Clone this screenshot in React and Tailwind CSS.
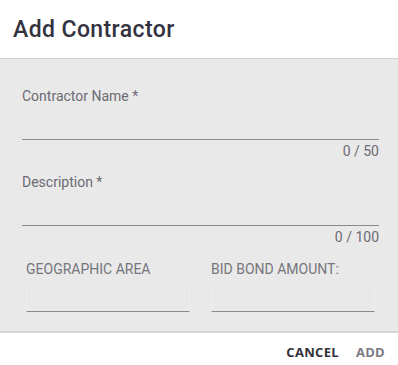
import React from 'react';

function LineField({ label, max, className = '' }) {
  return (
    <div className={className}>
      <label className="block text-[14px] leading-[16px] text-[#6b6b73]">{label}</label>
      <div className="mt-[20px] h-[16px] border-b border-[#8a8a92]" />
      <div className="mt-[3px] text-right text-[14px] leading-[16px] text-[#6b6b73]">0 / {max}</div>
    </div>
  );
}

function SmallField({ label }) {
  return (
    <div className="w-[164px]">
      <label className="block text-[14px] uppercase leading-[16px] text-[#75757d]">{label}</label>
      <div className="mt-[7px] h-[28px] border-x border-b border-x-[#eeeeee] border-b-[#8a8a92]" />
    </div>
  );
}

export default function App() {
  return (
    <div className="h-[365px] w-[398px] bg-white font-['Roboto',sans-serif]">
      <div className="h-[59px] border-b border-[#cfcfcf] px-[13px] pt-[16px]">
        <h2 className="text-[23px] font-medium leading-[28px] tracking-[0.4px] text-[#33323f]">Add Contractor</h2>
      </div>
      <div className="h-[274px] border-b-2 border-[#d6d6d6] bg-[#e9e9e9] pl-[22px] pr-[19px] pt-[29px]">
        <LineField label="Contractor Name *" max={50} />
        <LineField label="Description *" max={100} className="mt-[15px]" />
        <div className="mt-[16px] flex gap-[21px] pl-[4px]">
          <SmallField label="Geographic Area" />
          <SmallField label="Bid Bond Amount:" />
        </div>
      </div>
      <div className="flex justify-end gap-[17px] pr-[13px] pt-[11px] font-['Open_Sans',sans-serif] text-[13px] font-bold leading-[16px] tracking-[0.3px]">
        <button className="text-[#33323a]">CANCEL</button>
        <button className="text-[#7b7b82]">ADD</button>
      </div>
    </div>
  );
}
